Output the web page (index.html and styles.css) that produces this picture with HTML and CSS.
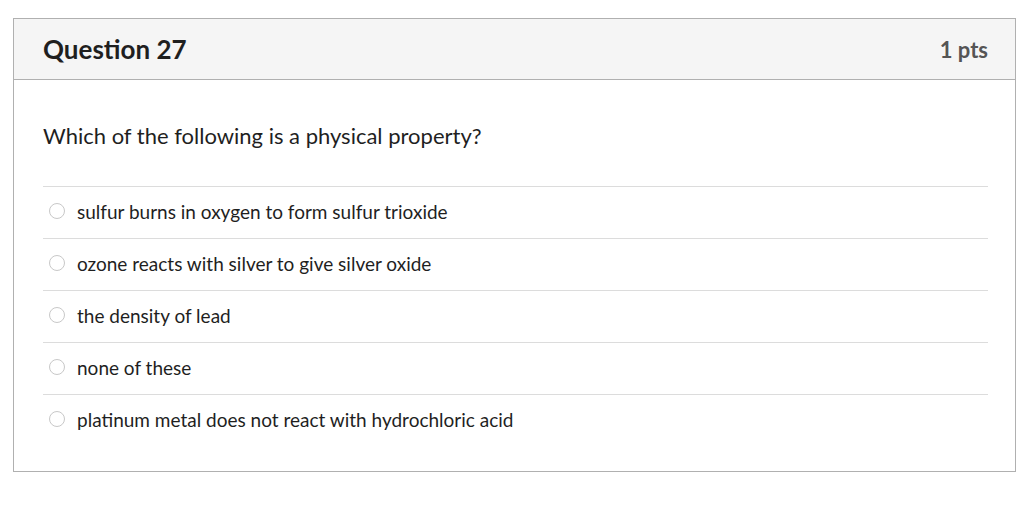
FILE: index.html
```html
<!DOCTYPE html>
<html>
<head>
<meta charset="utf-8">
<link rel="stylesheet" href="styles.css">
</head>
<body>
<div class="page">
  <div class="card">
    <div class="header">
      <span class="title">Question 27</span>
      <span class="pts">1 pts</span>
    </div>
    <div class="content">
      <p class="question">Which of the following is a physical property?</p>
      <div class="answers">
        <label class="answer"><span class="radio"></span><span>sulfur burns in oxygen to form sulfur trioxide</span></label>
        <label class="answer"><span class="radio"></span><span>ozone reacts with silver to give silver oxide</span></label>
        <label class="answer"><span class="radio"></span><span>the density of lead</span></label>
        <label class="answer"><span class="radio"></span><span>none of these</span></label>
        <label class="answer"><span class="radio"></span><span>platinum metal does not react with hydrochloric acid</span></label>
      </div>
    </div>
  </div>
</div>
</body>
</html>
```
FILE: styles.css
```css
html, body {
  margin: 0;
  padding: 0;
  background: #fff;
  font-family: Lato, "Liberation Sans", sans-serif;
  color: #2d3b45;
}
.page {
  padding: 18px 0 0 13px;
}
.card {
  width: 1001px;
  height: 452px;
  border: 1px solid #b0b0b0;
  box-sizing: content-box;
}
.header {
  height: 60px;
  background: #f5f5f5;
  border-bottom: 1px solid #b0b0b0;
  display: flex;
  align-items: center;
  justify-content: space-between;
  padding: 0 27px 0 29px;
}
.title {
  font-size: 26px;
  font-weight: 700;
  color: #1f1f1f;
}
.pts {
  font-size: 22px;
  font-weight: 700;
  color: #555;
}
.content {
  padding: 0 27px 0 29px;
}
.question {
  margin: 0;
  padding: 43px 0 0;
  height: 63px;
  font-size: 22px;
  line-height: 26px;
  color: #1f1f1f;
}
.answers {
  display: flex;
  flex-direction: column;
}
.answer {
  display: flex;
  align-items: center;
  gap: 12px;
  border-top: 1px solid #dcdcdc;
  font-size: 19px;
  color: #1f1f1f;
  padding-left: 6px;
  padding-bottom: 3px;
  box-sizing: border-box;
  height: 52px;
}
.radio {
  width: 14px;
  height: 14px;
  border: 1px solid #c8c8c8;
  border-radius: 50%;
  background: #fff;
  flex: none;
}
```
